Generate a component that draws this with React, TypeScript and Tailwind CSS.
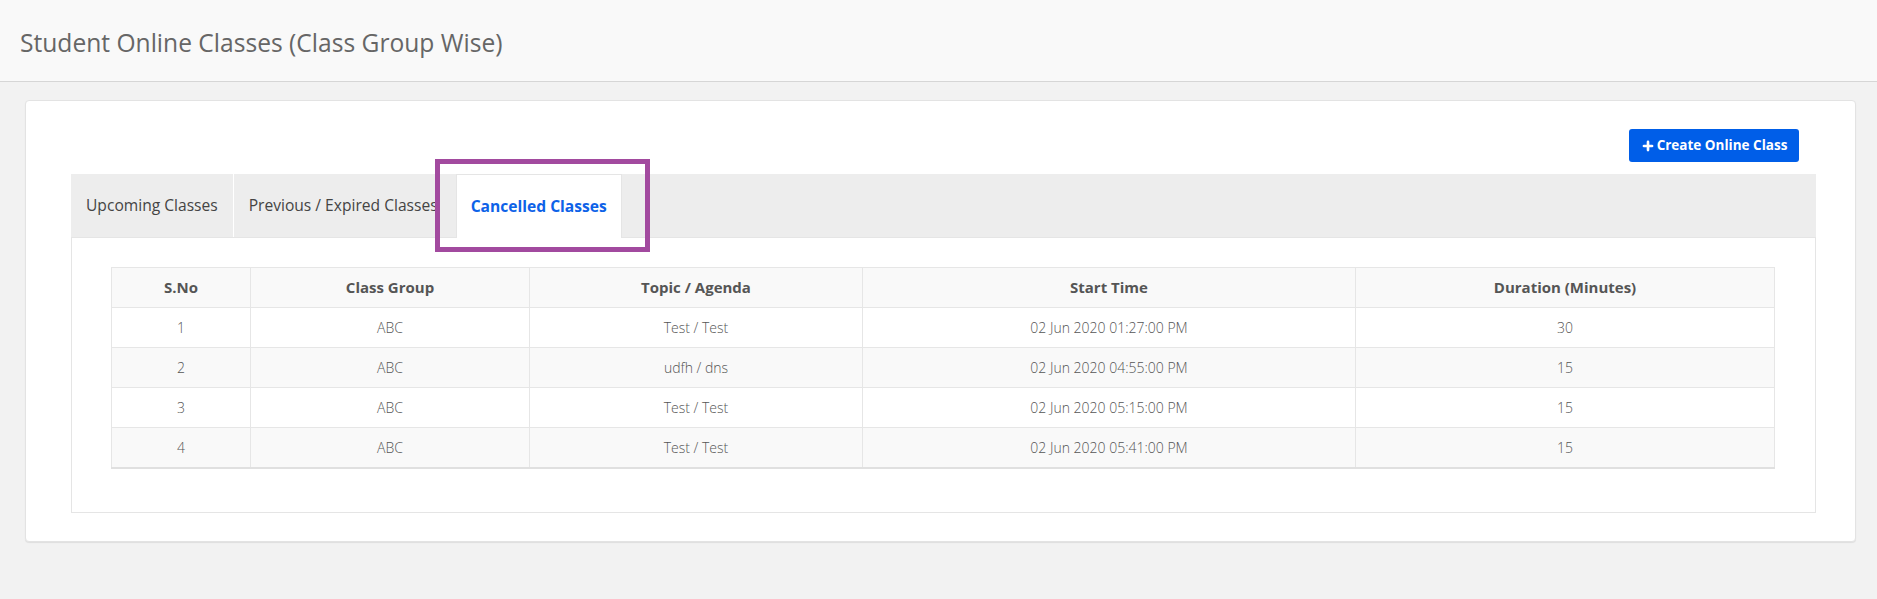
import { Plus } from 'lucide-react'

const rows = [
  { no: 1, group: 'ABC', topic: 'Test / Test', start: '02 Jun 2020 01:27:00 PM', duration: 30 },
  { no: 2, group: 'ABC', topic: 'udfh / dns', start: '02 Jun 2020 04:55:00 PM', duration: 15 },
  { no: 3, group: 'ABC', topic: 'Test / Test', start: '02 Jun 2020 05:15:00 PM', duration: 15 },
  { no: 4, group: 'ABC', topic: 'Test / Test', start: '02 Jun 2020 05:41:00 PM', duration: 15 },
]

/**
 * Cancelled online classes list, grouped by class group.
 * The purple frame around the active tab is a highlight laid over the tab bar.
 */
export default function App() {
  return (
    <div className="min-h-[599px] bg-[#f2f2f2] font-['Open_Sans',sans-serif]">
      <header className="h-[82px] border-b border-[#d6d6d6] bg-[#f9f9f9] pl-[20px] pt-[26px]">
        <h1 className="text-[24.6px] leading-[33px] text-[#666]">Student Online Classes (Class Group Wise)</h1>
      </header>

      <div className="ml-[25px] mr-[21px] mt-[18px] rounded-[4px] border border-[#e3e3e3] bg-white pb-[28px] pl-[45px] pr-[39px] pt-[28px] shadow-[0_1px_1px_rgba(0,0,0,0.08)]">
        <div className="flex justify-end pr-[17px]">
          <button
            type="button"
            className="flex h-[33px] w-[170px] items-center justify-center gap-[2px] rounded-[3px] bg-[#005ee8] text-[13.5px] font-bold text-white"
          >
            <Plus size={14} strokeWidth={4.5} aria-hidden="true" />
            Create Online Class
          </button>
        </div>

        <div className="relative mt-[12px] flex h-[64px] border-b border-[#e5e5e5] bg-[#ededed]">
          <button type="button" className="shrink-0 whitespace-nowrap border-r border-white px-[15px] text-[15.6px] text-[#444]">
            Upcoming Classes
          </button>
          <button type="button" className="w-[221px] shrink-0 overflow-hidden whitespace-nowrap px-[15px] text-left text-[15.6px] text-[#444]">
            Previous / Expired Classes
          </button>
          <button
            type="button"
            className="-mb-px ml-px shrink-0 whitespace-nowrap border border-b-0 border-[#e5e5e5] bg-white px-[14px] text-[15.6px] font-bold text-[#0d62e8]"
          >
            Cancelled Classes
          </button>
          <div className="pointer-events-none absolute left-[364px] top-[-15px] h-[93px] w-[215px] border-[5px] border-[#a24a9f]" />
        </div>

        <div className="border border-t-0 border-[#e5e5e5] pb-[43px] pl-[39px] pr-[40px] pt-[29px]">
          <table className="w-[1663px] table-fixed border-collapse border-b-2 border-[#e0e0e0] text-center text-[14px] font-light text-[#555]">
            <colgroup>
              <col className="w-[139px]" />
              <col className="w-[279px]" />
              <col className="w-[333px]" />
              <col className="w-[493px]" />
              <col className="w-[419px]" />
            </colgroup>
            <thead>
              <tr className="h-[40px] bg-[#f9f9f9] text-[15px] font-bold text-[#555]">
                <th className="border border-[#e6e6e6]">S.No</th>
                <th className="border border-[#e6e6e6]">Class Group</th>
                <th className="border border-[#e6e6e6]">Topic / Agenda</th>
                <th className="border border-[#e6e6e6]">Start Time</th>
                <th className="border border-[#e6e6e6]">Duration (Minutes)</th>
              </tr>
            </thead>
            <tbody>
              {rows.map((r) => (
                <tr key={r.no} className={r.no % 2 === 0 ? 'h-[40px] bg-[#f9f9f9]' : 'h-[40px] bg-white'}>
                  <td className="border border-[#e6e6e6]">{r.no}</td>
                  <td className="border border-[#e6e6e6]">{r.group}</td>
                  <td className="border border-[#e6e6e6]">{r.topic}</td>
                  <td className="border border-[#e6e6e6]">{r.start}</td>
                  <td className="border border-[#e6e6e6]">{r.duration}</td>
                </tr>
              ))}
            </tbody>
          </table>
        </div>
      </div>
    </div>
  )
}
